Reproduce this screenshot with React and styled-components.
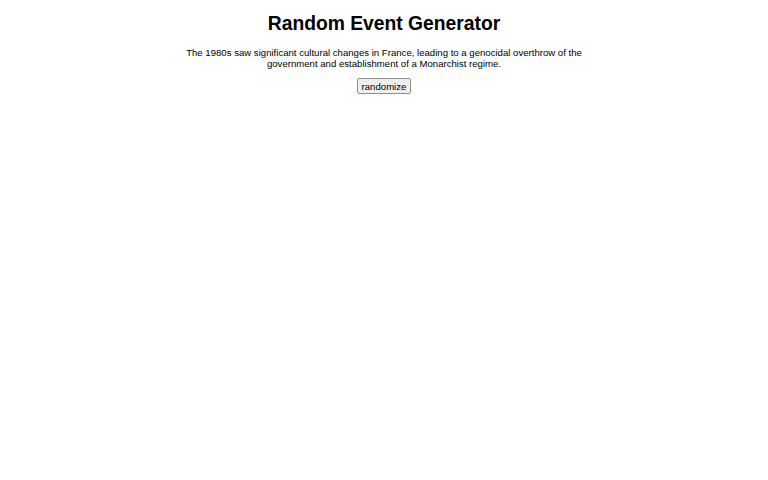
import React, { useState } from "react";
import styled, { createGlobalStyle } from "styled-components";

const GlobalStyle = createGlobalStyle`
  body {
    margin: 8px;
    background: #fff;
    font-family: "Liberation Sans", Arial, sans-serif;
    color: #000;
  }
`;

const Page = styled.div`
  text-align: center;
`;

const Title = styled.h1`
  font-size: 19.3px;
  font-weight: bold;
  margin: 1px 0 0;
  line-height: 30px;
`;

const Description = styled.p`
  font-size: 9.6px;
  line-height: 11px;
  max-width: 400px;
  margin: 8px auto 0;
`;

const RandomButton = styled.button`
  font-family: "Liberation Sans", Arial, sans-serif;
  font-size: 9.6px;
  line-height: 11px;
  margin-top: 9px;
  padding: 1.5px 4px;
  background: #efefef;
  border: 1px solid #8f8f8f;
  border-radius: 2px;
  color: #000;
`;

const events = [
  "The 1980s saw significant cultural changes in France, leading to a genocidal overthrow of the government and establishment of a Monarchist regime.",
];

function App() {
  const [event, setEvent] = useState(events[0]);

  return (
    <Page>
      <GlobalStyle />
      <Title>Random Event Generator</Title>
      <Description>{event}</Description>
      <RandomButton
        onClick={() => setEvent(events[Math.floor(Math.random() * events.length)])}
      >
        randomize
      </RandomButton>
    </Page>
  );
}

export default App;
